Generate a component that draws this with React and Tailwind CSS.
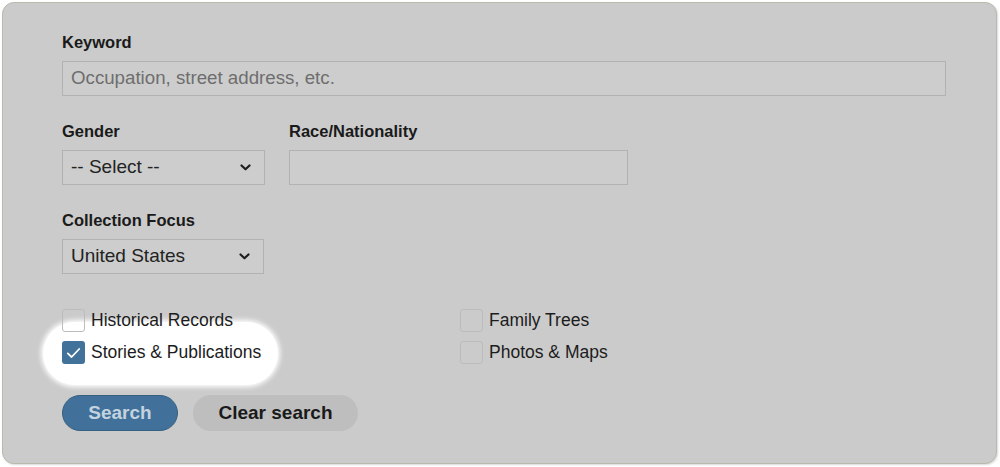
function Chevron() {
  return (
    <svg width="11" height="7" viewBox="0 0 11 7" className="shrink-0" aria-hidden="true">
      <path d="M1.5 1.5 L5.5 5.3 L9.5 1.5" fill="none" stroke="#1f1f1f" strokeWidth="2.2" strokeLinecap="round" strokeLinejoin="round" />
    </svg>
  );
}

function Select({ value, width }) {
  return (
    <div className={`flex h-[35px] ${width} items-center justify-between border border-[#b2b2b2] bg-[#cdcdcd] pl-[8px] pr-[13px] text-[19px] text-[#232323]`}>
      <span>{value}</span>
      <Chevron />
    </div>
  );
}

function Check({ label, checked }) {
  return (
    <label className="flex h-[23px] items-center gap-[6px] text-[17.5px] leading-[23px] text-[#1c1c1c]">
      {checked ? (
        <span className="grid h-[23px] w-[23px] place-items-center rounded-[3px] bg-[#42719a]">
          <svg width="15" height="12" viewBox="0 0 15 12" aria-hidden="true">
            <path d="M1.8 6.4 L5.6 10 L13.2 2" fill="none" stroke="#ffffff" strokeWidth="1.8" strokeLinecap="round" strokeLinejoin="round" />
          </svg>
        </span>
      ) : (
        <span className="h-[23px] w-[23px] rounded-[3px] border border-[#bcbcbc]" />
      )}
      <span>{label}</span>
    </label>
  );
}

export default function App() {
  return (
    <div className="h-[467px] w-[1000px] bg-white p-[2px] font-['Liberation_Sans',Arial,sans-serif]">
      <section className="relative h-[462px] w-[995px] rounded-[12px] border border-[#b9b9ad] bg-[#cbcbcb] pl-[59px] pt-[29px] shadow-[1px_1px_2px_rgba(0,0,0,0.15)]">
        {/* spotlight round the ticked option */}
        <div className="absolute left-[40px] top-[319px] h-[63px] w-[235px] rounded-full bg-white shadow-[0_0_5px_2px_#ffffff]" />

        <div className="relative">
          <p className="text-[16.5px] font-bold leading-[20px] text-[#1a1a1a]">Keyword</p>
          <div className="mt-[9px] flex h-[35px] w-[884px] items-center border border-[#b2b2b2] bg-[#cdcdcd] px-[8px] text-[18.7px] text-[#6e6e6e]">
            Occupation, street address, etc.
          </div>

          <div className="mt-[25px] flex gap-[24px]">
            <div>
              <p className="text-[16.5px] font-bold leading-[20px] text-[#1a1a1a]">Gender</p>
              <div className="mt-[9px]"><Select value="-- Select --" width="w-[203px]" /></div>
            </div>
            <div>
              <p className="text-[16.5px] font-bold leading-[20px] text-[#1a1a1a]">Race/Nationality</p>
              <div className="mt-[9px] h-[35px] w-[339px] border border-[#b2b2b2] bg-[#cdcdcd]" />
            </div>
          </div>

          <div className="mt-[25px]">
            <p className="text-[16.5px] font-bold leading-[20px] text-[#1a1a1a]">Collection Focus</p>
            <div className="mt-[9px]"><Select value="United States" width="w-[202px]" /></div>
          </div>

          <div className="mt-[35px] grid w-[560px] grid-cols-[398px_1fr] gap-y-[9px]">
            <Check label="Historical Records" />
            <Check label="Family Trees" />
            <Check label="Stories & Publications" checked />
            <Check label="Photos & Maps" />
          </div>

          <div className="mt-[31px] flex gap-[15px]">
            <button className="h-[36px] w-[116px] rounded-full border border-[#36607f] bg-[#41709a] text-[19px] font-bold text-[#c3d3df]">
              Search
            </button>
            <button className="h-[36px] w-[165px] rounded-full bg-[#bebebe] text-[19px] font-bold text-[#1a1a1a]">
              Clear search
            </button>
          </div>
        </div>
      </section>
    </div>
  );
}
